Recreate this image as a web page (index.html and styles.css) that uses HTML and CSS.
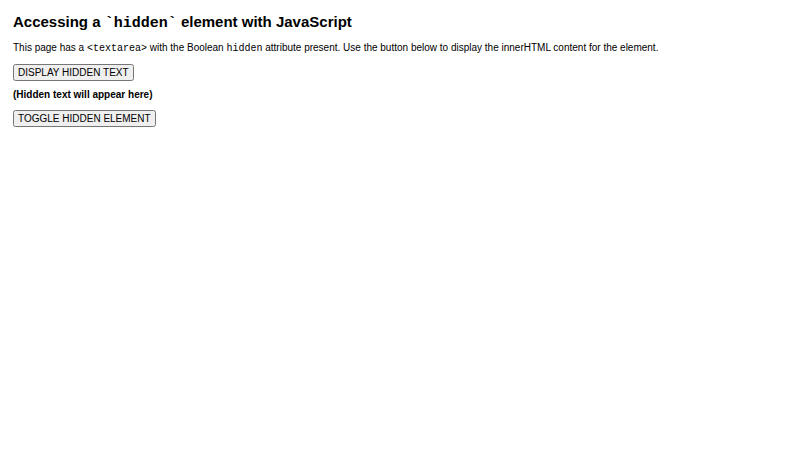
FILE: index.html
```html
<!DOCTYPE html>
<html lang="en">
<head>
    <meta charset="UTF-8">
    <title>Accessing a hidden element</title>
    <link rel="stylesheet" href="styles.css">
</head>
<body>
    <h1>Accessing a <code>`hidden`</code> element with JavaScript</h1>
    <p>This page has a <code>&lt;textarea&gt;</code> with the Boolean <code>hidden</code> attribute present. Use the button below to display the innerHTML content for the element.</p>

    <button id="showBtn" onclick="showHidden()">Display hidden text</button>
    <p id="output" class="output">(Hidden text will appear here)</p>
    <button id="toggleBtn" onclick="toggleHidden()">Toggle hidden element</button>

    <textarea id="secret" hidden>This text was hidden inside the textarea.</textarea>

    <script>
        function showHidden() {
            const area = document.getElementById('secret');
            document.getElementById('output').textContent = area.innerHTML;
        }

        function toggleHidden() {
            const area = document.getElementById('secret');
            area.hidden = !area.hidden;
        }
    </script>
</body>
</html>
```

FILE: styles.css
```css
/* General Styles */
body {
    font-family: "Liberation Sans", Arial, sans-serif;
    font-size: 10px;
    margin: 13px;
    color: #000;
}

/* Title Style */
h1 {
    font-size: 15px;
    margin: 0 0 10px 0;
}

h1 code {
    font-family: "Liberation Mono", monospace;
    font-size: 15px;
}

p {
    margin: 0 0 10px 0;
}

p code {
    font-family: "Liberation Mono", monospace;
    font-size: 10px;
}

.output {
    font-weight: bold;
    margin: 8px 0 10px 0;
}

/* Button Styles */
button {
    font-family: "Liberation Sans", Arial, sans-serif;
    font-size: 10px;
    text-transform: uppercase;
    padding: 1px 3px;
}
```
